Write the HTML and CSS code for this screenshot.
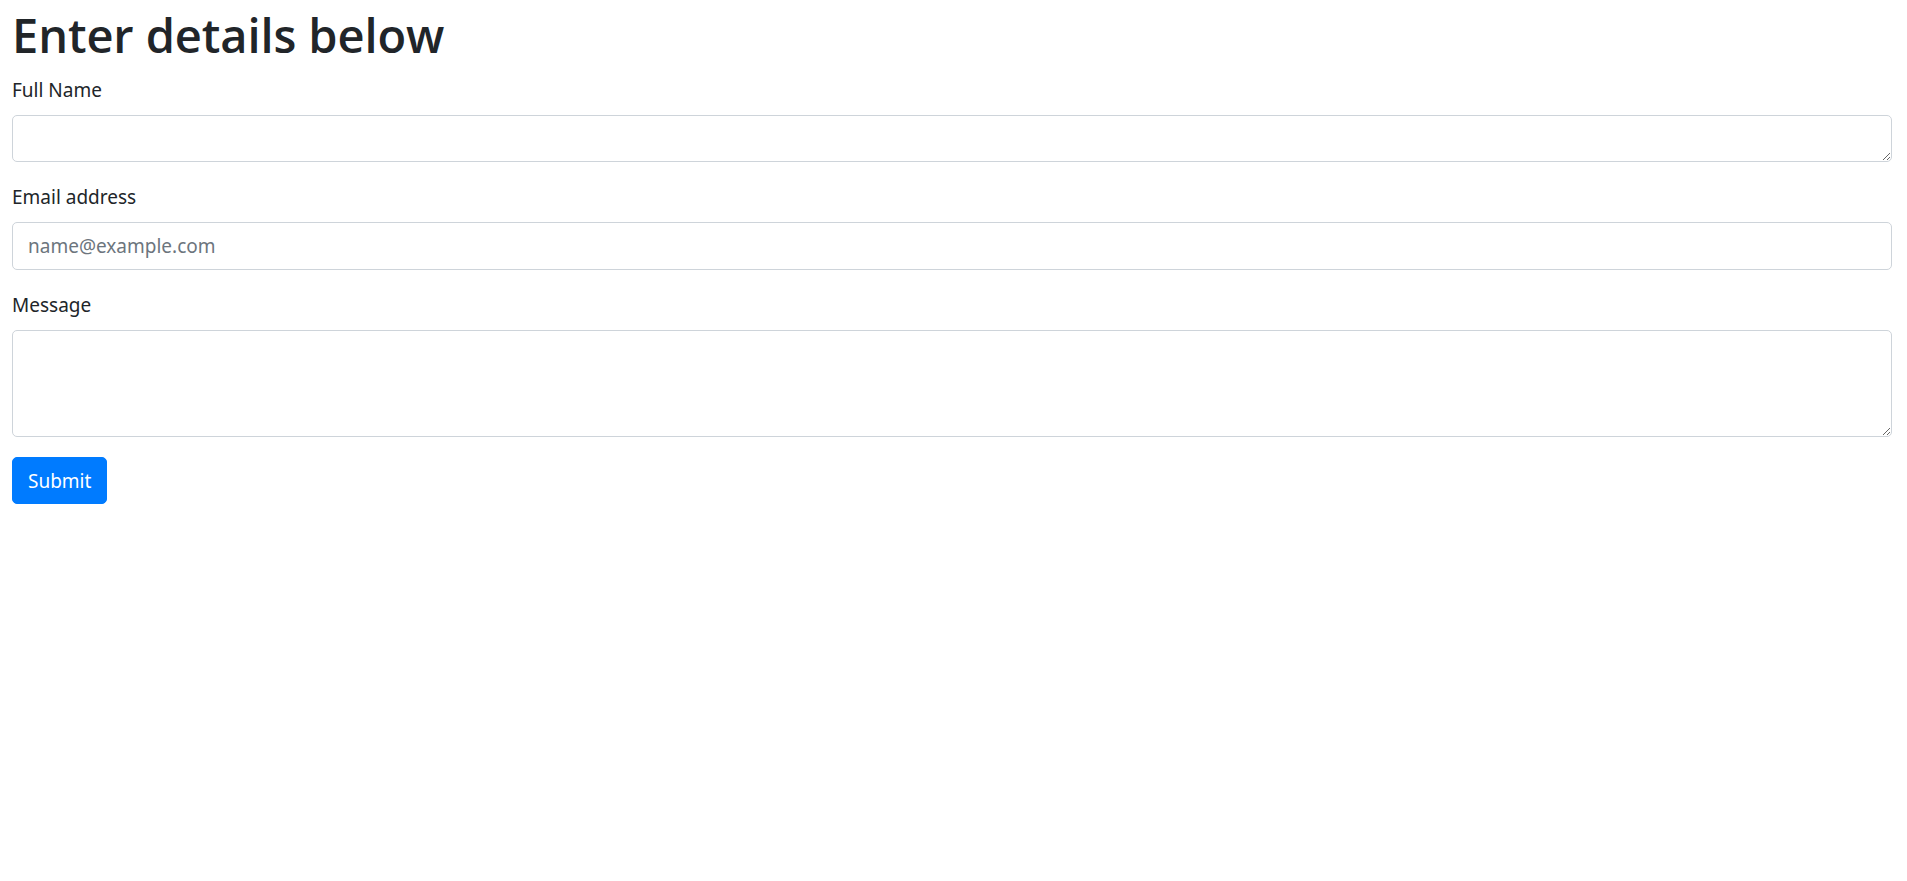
FILE: index.html
```html
<!DOCTYPE html>
<html lang="en">
<head>
<meta charset="utf-8">
<title>Enter details below</title>
<link rel="stylesheet" href="styles.css">
</head>
<body>
<div class="page">
  <h1 class="title">Enter details below</h1>
  <form class="form">
    <div class="group">
      <label class="label" for="name">Full Name</label>
      <textarea class="control control-name" id="name"></textarea>
    </div>
    <div class="group">
      <label class="label" for="email">Email address</label>
      <input class="control control-email" id="email" type="email" placeholder="name@example.com">
    </div>
    <div class="group">
      <label class="label" for="msg">Message</label>
      <textarea class="control control-msg" id="msg"></textarea>
    </div>
    <button class="btn" type="button">Submit</button>
  </form>
</div>
</body>
</html>
```

FILE: styles.css
```css
* { box-sizing: border-box; }
html, body { margin: 0; padding: 0; background: #fff; }
body {
  font-family: "Noto Sans", "Open Sans", sans-serif;
  color: #212529;
  font-size: 20px;
  line-height: 1.5;
}
.page {
  padding: 4.5px 15px 0 12px;
}
.title {
  margin: 0 0 10px 0;
  font-family: "Open Sans", "Noto Sans", sans-serif;
  font-size: 47px;
  font-weight: 600;
  line-height: 60px;
  letter-spacing: -0.1px;
}
.form { display: flex; flex-direction: column; align-items: flex-start; }
.group { width: 100%; margin-bottom: 20px; display: flex; flex-direction: column; }
.label { display: block; margin-bottom: 10px; line-height: 30px; font-size: 19px; }
.control {
  display: block;
  width: 100%;
  margin: 0;
  padding: 7px 15px;
  font-family: inherit;
  font-size: 19px;
  line-height: 30px;
  color: #495057;
  background: #fff;
  border: 1px solid #ced4da;
  border-radius: 5px;
  outline: none;
}
.control::placeholder { color: #6c757d; opacity: 1; }
.control-name { height: 47.5px; resize: vertical; }
.control-email { height: 47.5px; }
.control-msg { height: 107.5px; resize: vertical; }
.btn {
  height: 47px;
  padding: 0 15px;
  font-family: inherit;
  font-size: 19px;
  line-height: 30px;
  color: #fff;
  background: #007bff;
  border: 1px solid #007bff;
  border-radius: 5px;
  cursor: pointer;
}
```
